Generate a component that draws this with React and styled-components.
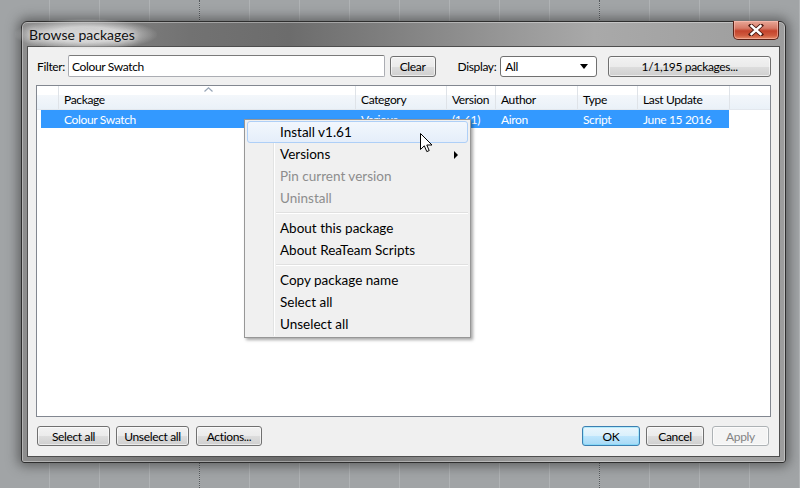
import React from "react";
import styled, { createGlobalStyle } from "styled-components";

const Global = createGlobalStyle`
  html, body { margin: 0; padding: 0; }
  body {
    width: 800px; height: 488px; overflow: hidden;
    font-family: Lato, "Noto Sans", "Liberation Sans", sans-serif;
    font-size: 12px; letter-spacing: -0.35px; color: #000;
    background-color: #a1a4a6;
    background-image:
      repeating-linear-gradient(90deg, transparent 0 49px, #b0b3b5 49px 50px);
  }
`;

const Desktop = styled.div`
  position: relative;
  width: 800px; height: 488px;
  padding: 21px 0 0 21px;
  box-sizing: border-box;
`;

const DottedLine = styled.div`
  position: absolute; top: 0; bottom: 0;
  width: 0; border-left: 1px dotted #55595c;
`;

const Window = styled.div`
  position: relative;
  width: 765px; height: 442px;
  box-sizing: border-box;
  border: 1px solid #2e2e2e;
  border-radius: 6px 6px 3px 3px;
  background: linear-gradient(90deg, #8e8e8e 0%, #727272 22%, #6c6c6c 35%, #8a8a8a 55%, #a9a9a9 75%, #9d9d9d 100%);
  box-shadow: 0 0 12px 3px rgba(40,40,40,0.55), inset 0 0 0 1px rgba(255,255,255,0.35);
  display: flex; flex-direction: column;
  padding: 0 5px 5px 5px;
`;

const TitleBar = styled.div`
  height: 27px;
  display: flex; align-items: center;
  position: relative;
`;

const Title = styled.div`
  position: relative;
  font-size: 14px;
  letter-spacing: 0;
  color: #111;
  padding-left: 2px;
  text-shadow: 0 0 6px #eee, 0 0 10px #ddd;
  z-index: 1;
  &::before {
    content: "";
    position: absolute; left: -12px; right: -22px; top: -7px; bottom: -7px;
    background: radial-gradient(ellipse at center, rgba(215,215,215,0.9) 35%, rgba(200,200,200,0) 72%);
    z-index: -1;
  }
`;

const CloseBtn = styled.div`
  position: absolute; right: 1px; top: -1px;
  width: 46px; height: 19px;
  box-sizing: border-box;
  border: 1px solid #5b2218;
  border-top: none;
  border-radius: 0 0 5px 5px;
  background: linear-gradient(180deg, #e9a898 0%, #d67a67 40%, #c4432c 55%, #cf5a3e 80%, #e58d6a 100%);
  box-shadow: inset 0 0 0 1px rgba(255,200,190,0.5);
  display: flex; align-items: center; justify-content: center;
`;

const Client = styled.div`
  flex: 1;
  background: #f0f0f0;
  border: 1px solid #4e4e4e;
  display: flex; flex-direction: column;
  padding: 8px 8px 10px 8px;
  box-sizing: border-box;
`;

const TopRow = styled.div`
  display: flex; align-items: center;
  height: 22px;
`;

const Label = styled.span`
  color: #000;
  margin-right: ${p => p.$mr || 3}px;
  margin-left: ${p => p.$ml || 0}px;
`;

const TextInput = styled.div`
  width: 317px; height: 22px;
  box-sizing: border-box;
  background: #fff;
  border: 1px solid #abadb3;
  border-top-color: #7a7a7a;
  border-radius: 2px;
  padding: 0 3px;
  display: flex; align-items: center;
`;

const Button = styled.div`
  width: ${p => p.$w}px; height: ${p => p.$h || 21}px;
  box-sizing: border-box;
  margin-left: ${p => p.$ml || 0}px;
  border: 1px solid ${p => (p.$focus ? "#3c7fb1" : p.$disabled ? "#adb2b5" : "#707070")};
  border-radius: 3px;
  color: ${p => (p.$disabled ? "#838383" : "#000")};
  background: ${p =>
    p.$focus
      ? "linear-gradient(180deg, #eaf6fd 0%, #d9f0fc 50%, #bee6fd 51%, #a7d9f5 100%)"
      : p.$disabled
      ? "#f4f4f4"
      : "linear-gradient(180deg, #f2f2f2 0%, #ebebeb 50%, #dddddd 51%, #cfcfcf 100%)"};
  box-shadow: ${p => (p.$focus ? "inset 0 0 0 1px #48d8fb55" : "inset 0 0 0 1px rgba(255,255,255,0.6)")};
  display: flex; align-items: center; justify-content: center;
`;

const Select = styled.div`
  width: 97px; height: 21px;
  box-sizing: border-box;
  border: 1px solid #707070;
  border-radius: 3px;
  background: #fff;
  display: flex; align-items: center; justify-content: space-between;
  padding: 0 8px 0 4px;
`;

const List = styled.div`
  position: relative;
  margin-top: 8px;
  height: 332px;
  box-sizing: border-box;
  border: 1px solid #828790;
  background: #fff;
  display: flex; flex-direction: column;
`;

const Header = styled.div`
  display: flex;
  height: 23px;
  background: linear-gradient(180deg, #ffffff 0%, #ffffff 40%, #f3f7fb 41%, #eaf1f8 100%);
  border-bottom: 1px solid #e3e8ee;
`;

const HeadCell = styled.div`
  position: relative;
  width: ${p => p.$w}px;
  flex: ${p => (p.$grow ? 1 : "none")};
  box-sizing: border-box;
  border-right: ${p => (p.$grow ? "none" : "1px solid #dfe3e8")};
  padding: 3px 0 0 5px;
  color: #000;
  display: flex; align-items: center;
`;

const SortArrow = styled.svg`
  position: absolute; top: 1px; left: 145px;
`;

const Row = styled.div`
  display: flex;
  margin-left: 4px;
  height: 18px;
  width: 688px;
  background: ${p => (p.$selected ? "#3399ff" : "transparent")};
  color: ${p => (p.$selected ? "#fff" : "#000")};
`;

const Cell = styled.div`
  width: ${p => p.$w}px;
  box-sizing: border-box;
  padding-left: 5px;
  display: flex; align-items: center;
  white-space: nowrap; overflow: hidden;
`;

const BottomRow = styled.div`
  display: flex; align-items: center;
  margin-top: 9px;
  padding: 0 2px 0 1px;
`;

const Spacer = styled.div`flex: 1;`;

const Menu = styled.div`
  position: absolute;
  left: 244px; top: 119px;
  width: 227px;
  box-sizing: border-box;
  background: #f0f0f0;
  border: 1px solid #979797;
  box-shadow: 2px 2px 3px rgba(0,0,0,0.35);
  padding: 1px 2px 2px 2px;
  z-index: 10;
  font-size: 13.5px;
  letter-spacing: 0;
  &::before {
    content: "";
    position: absolute; left: 28px; top: 1px; bottom: 1px;
    width: 1px; background: #e2e3e3;
    border-right: 1px solid #fff;
  }
`;

const MenuItem = styled.div`
  position: relative;
  height: 22px;
  box-sizing: border-box;
  display: flex; align-items: center;
  padding-left: 32px;
  color: ${p => (p.$disabled ? "#8d8d8d" : "#000")};
  border: 1px solid ${p => (p.$hot ? "#aecff7" : "transparent")};
  border-radius: 3px;
  background: ${p => (p.$hot ? "linear-gradient(180deg, #f2f7fd 0%, #e5eefa 100%)" : "transparent")};
  z-index: 1;
`;

const SubArrow = styled.span`
  position: absolute; right: 9px; top: 7px;
  width: 0; height: 0;
  border-left: 4px solid #000;
  border-top: 4px solid transparent;
  border-bottom: 4px solid transparent;
`;

const Separator = styled.div`
  height: 8px;
  display: flex; align-items: center;
  padding-left: 29px;
  &::after {
    content: "";
    flex: 1;
    height: 1px;
    background: #e0e0e0;
    border-bottom: 1px solid #fff;
  }
`;

const Cursor = styled.svg`
  position: absolute; left: 420px; top: 133px;
  z-index: 20;
`;

const cols = [
  { name: "", w: 22 },
  { name: "Package", w: 297 },
  { name: "Category", w: 91 },
  { name: "Version", w: 49 },
  { name: "Author", w: 82 },
  { name: "Type", w: 60 },
  { name: "Last Update", w: 92 },
];

export default function App() {
  return (
    <>
      <Global />
      <Desktop>
        <DottedLine style={{ left: 199 }} />
        <DottedLine style={{ left: 599 }} />
        <Window>
          <TitleBar>
            <Title>Browse packages</Title>
            <CloseBtn>
              <svg width="16" height="12" viewBox="0 0 16 12">
                <path d="M3 1.5 L13 10.5 M13 1.5 L3 10.5" stroke="#4a1a12" strokeWidth="4.2" strokeLinecap="square" />
                <path d="M3.5 2 L12.5 10 M12.5 2 L3.5 10" stroke="#fff" strokeWidth="2.4" strokeLinecap="square" />
              </svg>
            </CloseBtn>
          </TitleBar>
          <Client>
            <TopRow>
              <Label $mr={3} $ml={1}>Filter:</Label>
              <TextInput>Colour Swatch</TextInput>
              <Button $w={46} $ml={5}>Clear</Button>
              <Label $ml={22} $mr={4}>Display:</Label>
              <Select>
                <span>All</span>
                <svg width="8" height="5" viewBox="0 0 8 5"><path d="M0 0 H8 L4 5 Z" fill="#000" /></svg>
              </Select>
              <Button $w={163} $ml={11}>1/1,195 packages...</Button>
            </TopRow>
            <List>
              <Header>
                {cols.map((c, i) => (
                  <HeadCell key={i} $w={c.w}>
                    {c.name}
                    {c.name === "Package" && (
                      <SortArrow width="9" height="5" viewBox="0 0 9 5">
                        <path d="M0.5 4.5 L4.5 0.8 L8.5 4.5" fill="none" stroke="#97a5b6" strokeWidth="1.2" />
                      </SortArrow>
                    )}
                  </HeadCell>
                ))}
                <HeadCell $grow />
              </Header>
              <Row $selected>
                <Cell $w={18} />
                <Cell $w={297}>Colour Swatch</Cell>
                <Cell $w={91}>Various</Cell>
                <Cell $w={49}>(1.61)</Cell>
                <Cell $w={82}>Airon</Cell>
                <Cell $w={60}>Script</Cell>
                <Cell $w={91}>June 15 2016</Cell>
              </Row>
            </List>
            <BottomRow>
              <Button $w={73} $h={20}>Select all</Button>
              <Button $w={73} $h={20} $ml={6}>Unselect all</Button>
              <Button $w={66} $h={20} $ml={7}>Actions...</Button>
              <Spacer />
              <Button $w={58} $h={20} $focus>OK</Button>
              <Button $w={58} $h={20} $ml={6}>Cancel</Button>
              <Button $w={57} $h={20} $ml={8} $disabled>Apply</Button>
            </BottomRow>
          </Client>
        </Window>
        <Menu>
          <MenuItem $hot>Install v1.61</MenuItem>
          <MenuItem>Versions<SubArrow /></MenuItem>
          <MenuItem $disabled>Pin current version</MenuItem>
          <MenuItem $disabled>Uninstall</MenuItem>
          <Separator />
          <MenuItem>About this package</MenuItem>
          <MenuItem>About ReaTeam Scripts</MenuItem>
          <Separator />
          <MenuItem>Copy package name</MenuItem>
          <MenuItem>Select all</MenuItem>
          <MenuItem>Unselect all</MenuItem>
        </Menu>
        <Cursor width="13" height="20" viewBox="0 0 13 20">
          <path d="M0.5 0.5 L0.5 16.5 L4.3 12.8 L6.8 18.6 L9.2 17.6 L6.8 12 L12 12 Z" fill="#fff" stroke="#000" strokeWidth="1" strokeLinejoin="miter" />
        </Cursor>
      </Desktop>
    </>
  );
}
